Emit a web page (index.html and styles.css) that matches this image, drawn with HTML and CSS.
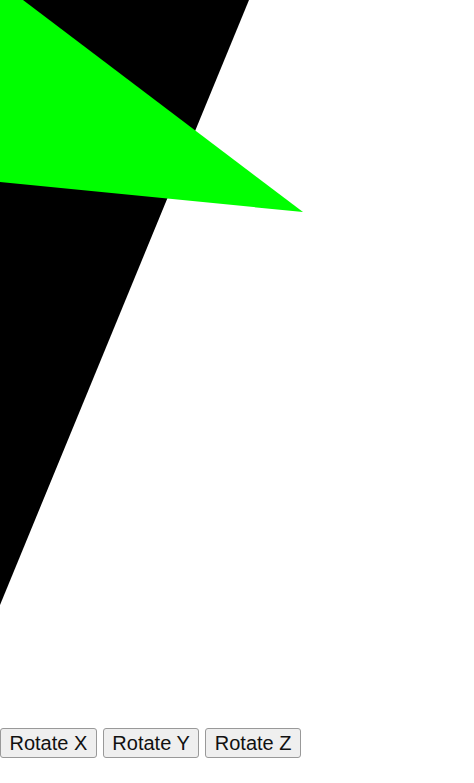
FILE: index.html
```html
<!DOCTYPE html>
<html lang="en">
<head>
  <meta charset="UTF-8" />
  <meta name="viewport" content="width=device-width, initial-scale=1.0"/>
  <title>Rotate</title>
  <link rel="stylesheet" href="styles.css">
</head>
<body>

  <!-- The drawing area with the two shapes -->
  <div class="scene">
    <svg class="scene-svg" width="474" height="728" viewBox="0 0 474 728">
      <!-- black shape -->
      <polygon points="0,0 249,0 0,605" fill="#000000"/>
      <!-- green shape -->
      <polygon points="0,0 23,0 303,212 0,182" fill="#00ff00"/>
    </svg>
  </div>

  <div class="controls">
    <button class="rotate-btn">Rotate X</button>
    <button class="rotate-btn">Rotate Y</button>
    <button class="rotate-btn">Rotate Z</button>
  </div>

</body>
</html>
```

FILE: styles.css
```css
/* Page with no spacing round it */
body {
  margin: 0;
  padding: 0;
  background-color: white;
  font-family: "Liberation Sans", Arial, sans-serif;
  overflow: hidden;
}

/* The drawing area */
.scene {
  height: 728px;
  overflow: hidden;
}

.scene-svg {
  display: block;
}

/* Row of buttons under the drawing */
.controls {
  display: flex;
  gap: 6px;
}

.rotate-btn {
  font-family: "Liberation Sans", Arial, sans-serif;
  font-size: 20px;
  line-height: 24px;
  padding: 2px 8.5px;
  color: #111;
  background-color: #efefef;
  border: 1px solid #999;
  border-radius: 3px;
}
```
